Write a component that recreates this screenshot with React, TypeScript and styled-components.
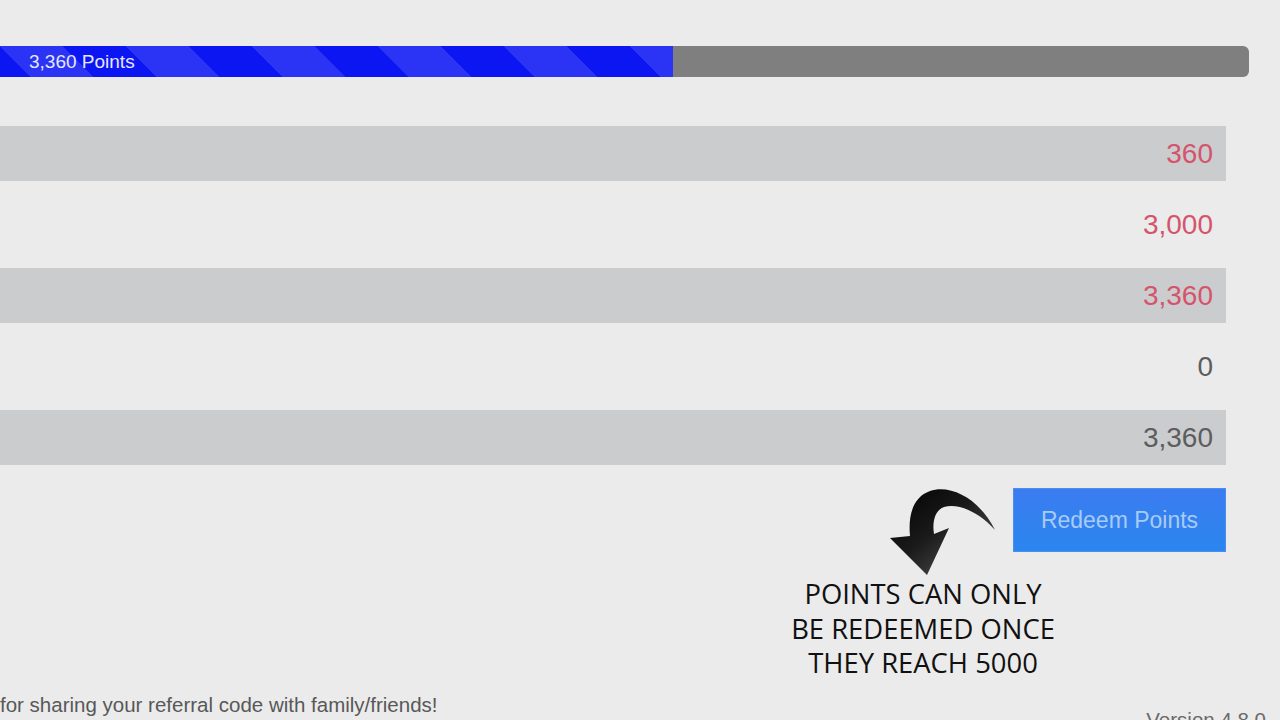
import styled, { createGlobalStyle } from "styled-components";

const GlobalStyle = createGlobalStyle`
  html, body {
    margin: 0;
    padding: 0;
    background: #ebebeb;
    overflow: hidden;
  }
  body {
    font-family: "Liberation Sans", Arial, sans-serif;
  }
`;

const Page = styled.div`
  width: 1280px;
  height: 720px;
  padding-top: 46px;
  box-sizing: border-box;
  overflow: hidden;
`;

const Track = styled.div`
  width: 1249px;
  height: 31px;
  background: #7f7f7f;
  border-radius: 0 6px 6px 0;
  overflow: hidden;
  display: flex;
`;

const Fill = styled.div`
  height: 100%;
  display: flex;
  align-items: center;
  padding-left: 29px;
  box-sizing: border-box;
  background-color: #0c16f2;
  background-image: linear-gradient(
    45deg,
    rgba(255, 255, 255, 0.13) 25%,
    transparent 25%,
    transparent 50%,
    rgba(255, 255, 255, 0.13) 50%,
    rgba(255, 255, 255, 0.13) 75%,
    transparent 75%,
    transparent
  );
  background-size: 126px 126px;
  color: #e4e7ff;
  font-size: 19px;
  white-space: nowrap;
`;

const Summary = styled.div`
  width: 1226px;
  margin-top: 49px;
  display: flex;
  flex-direction: column;
  gap: 16px;
`;

const Row = styled.div<{ $striped: boolean }>`
  height: 55px;
  display: flex;
  align-items: center;
  justify-content: flex-end;
  padding-right: 13px;
  background: ${(p) => (p.$striped ? "#cbcccd" : "transparent")};
`;

const Amount = styled.span<{ $tone: "red" | "dark" }>`
  font-size: 28px;
  color: ${(p) => (p.$tone === "red" ? "#d5546d" : "#5b5d60")};
`;

const ActionRow = styled.div`
  width: 1226px;
  margin-top: 23px;
  display: flex;
  justify-content: flex-end;
  align-items: flex-start;
  gap: 3px;
`;

const CurvedArrow = styled.svg`
  margin-top: -8px;
  display: block;
`;

const RedeemButton = styled.button`
  width: 213px;
  height: 64px;
  border: 1px solid #4a8ef2;
  background: linear-gradient(180deg, #3b7cf0 0%, #2b86ef 100%);
  color: #a8cbf6;
  font-family: "Liberation Sans", Arial, sans-serif;
  font-size: 23px;
  cursor: pointer;
`;

const Caption = styled.div`
  width: 400px;
  margin-left: 723px;
  margin-top: -3px;
  text-align: center;
  font-family: "Open Sans", "Noto Sans", sans-serif;
  font-size: 27.4px;
  line-height: 34.5px;
  color: #111;
`;

const Footer = styled.div`
  margin-top: 12px;
  display: flex;
  justify-content: space-between;
  align-items: flex-start;
  padding-right: 14px;
  font-size: 20.5px;
  color: #585858;
`;

const Version = styled.span`
  margin-top: 15px;
  color: #6a6a6a;
`;

const rows: { value: string; tone: "red" | "dark" }[] = [
  { value: "360", tone: "red" },
  { value: "3,000", tone: "red" },
  { value: "3,360", tone: "red" },
  { value: "0", tone: "dark" },
  { value: "3,360", tone: "dark" },
];

export default function App() {
  const earned = 3360;
  const pct = (673 / 1249) * 100;
  return (
    <Page>
      <GlobalStyle />
      <Track>
        <Fill style={{ width: `${pct}%` }}>{earned.toLocaleString("en-US")} Points</Fill>
      </Track>

      <Summary>
        {rows.map((r, i) => (
          <Row key={i} $striped={i % 2 === 0}>
            <Amount $tone={r.tone}>{r.value}</Amount>
          </Row>
        ))}
      </Summary>

      <ActionRow>
        <CurvedArrow width="130" height="100" viewBox="0 0 130 100">
          <defs>
            <linearGradient id="arrowShade" x1="0" y1="0" x2="1" y2="1">
              <stop offset="0" stopColor="#000" />
              <stop offset="0.45" stopColor="#1a1a1a" />
              <stop offset="0.7" stopColor="#3a3a3a" />
              <stop offset="1" stopColor="#111" />
            </linearGradient>
          </defs>
          <path
            d="M115 50 C 100 20, 72 4, 50 11 C 33 17, 28 35, 30 56 L 10 58 L 47 95 L 69 48 L 54 54 C 52 42, 55 30, 64 27 C 80 23, 100 33, 115 50 Z"
            fill="url(#arrowShade)"
          />
        </CurvedArrow>
        <RedeemButton>Redeem Points</RedeemButton>
      </ActionRow>

      <Caption>
        POINTS CAN ONLY
        <br />
        BE REDEEMED ONCE
        <br />
        THEY REACH 5000
      </Caption>

      <Footer>
        <span>for sharing your referral code with family/friends!</span>
        <Version>Version 4.8.0</Version>
      </Footer>
    </Page>
  );
}
